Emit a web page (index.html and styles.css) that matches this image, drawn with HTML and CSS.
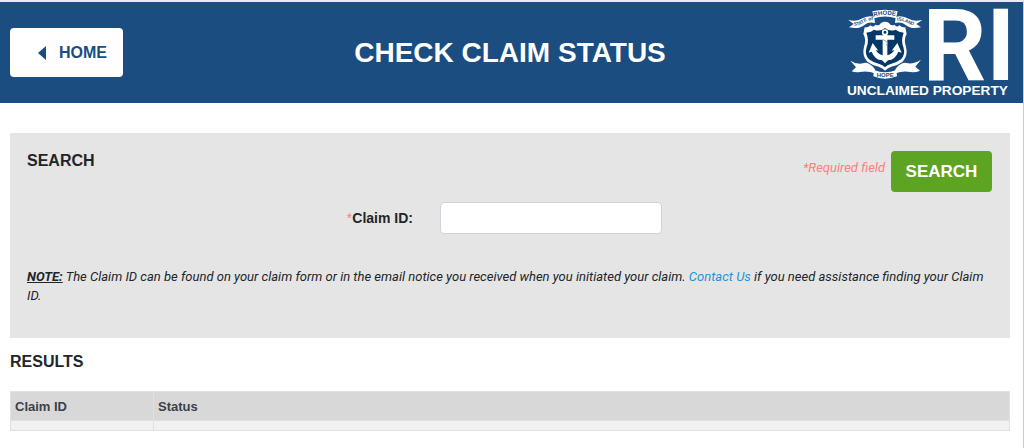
FILE: index.html
```
<!DOCTYPE html>
<html lang="en">
<head>
  <meta charset="UTF-8">
  <title>Check Claim Status</title>
  <link rel="stylesheet" href="styles.css">
</head>
<body>
  <header class="header">
    <button type="button" class="btn-home">
      <svg class="caret" viewBox="0 0 8 14" aria-hidden="true"><path d="M8 0v14L0 7z"/></svg>
      HOME
    </button>
    <h1>CHECK CLAIM STATUS</h1>
    <svg class="logo" viewBox="6 12 492 270" role="img" aria-label="RI Unclaimed Property">
      <!-- shield -->
      <path class="white" d="M62 70 Q72 72 80 64 Q88 72 94 62 Q105 68 111 57 Q123 50 135 57 Q141 68 152 62 Q158 72 166 64 Q174 72 184 70 L188 90 Q178 108 186 128 Q193 154 176 173 Q160 185 142 188 Q130 192 123 200 Q116 192 104 188 Q86 185 70 173 Q53 154 60 128 Q68 108 58 90z"/>
      <path class="navy" d="M67 86 Q82 84 91 77 Q108 84 123 72 Q138 84 155 77 Q164 84 179 86 Q170 108 178 129 Q185 151 171 166 Q156 177 140 180 Q130 183 123 190 Q116 183 106 180 Q90 177 75 166 Q61 151 68 129 Q76 108 67 86z"/>
      <!-- anchor -->
      <path class="white" d="M118 90 H129 V94 H151 V107 H130 V154 Q145 150 151 138 L143 140 L160 117 L173 146 L163 143 Q154 167 132 169 L123 178 L114 169 Q92 167 83 143 L74 146 L86 117 L103 140 L95 138 Q101 150 116 154 V107 H95 V94 H118z"/>
      <circle class="ring" cx="123" cy="85" r="7"/>
      <path class="rope" d="M118 107 Q136 115 127 124"/>
      <!-- top ribbon -->
      <path class="white" d="M13 48 Q39 53 50 45 Q73 33 91 39 L93 57 Q74 53 61 63 Q46 77 15 70 L29 60z"/>
      <path class="white" d="M235 48 Q209 53 196 45 Q173 33 155 39 L153 57 Q172 53 185 63 Q200 77 231 70 L217 60z"/>
      <path class="white" d="M85 22 Q123 12 161 22 L156 43 Q123 32 90 43z"/>
      <path id="rhode" class="none" d="M90 38 Q123 27 160 38"/>
      <path id="state" class="none" d="M29 64 Q46 66 59 56 Q73 46 96 50"/>
      <path id="island" class="none" d="M160 50 Q175 48 188 56 Q201 65 225 64"/>
      <text class="motto"><textPath href="#rhode">RHODE</textPath></text>
      <text class="motto small"><textPath href="#state">STATE of</textPath></text>
      <text class="motto small"><textPath href="#island">ISLAND</textPath></text>
      <!-- bottom ribbon -->
      <path class="white" d="M19 170 Q42 184 60 177 Q74 174 92 194 L96 209 Q70 199 48 204 Q35 206 23 202 L36 190z"/>
      <path class="white" d="M231 167 Q206 182 188 177 Q172 174 155 194 L151 209 Q177 199 199 204 Q214 206 228 200 L214 188z"/>
      <path class="white" d="M90 198 Q123 212 157 198 L159 217 Q123 231 88 217z"/>
      <text class="motto" x="98" y="220">HOPE</text>
      <text class="state-code" x="236" y="228">RI</text>
      <text class="caption" x="9" y="273">UNCLAIMED PROPERTY</text>
    </svg>
  </header>

  <main>
    <form class="search">
      <div class="search-top">
        <h2>SEARCH</h2>
        <span class="required">*Required field</span>
        <button type="button" class="btn-search">SEARCH</button>
      </div>
      <div class="field">
        <label for="claimId"><span>*</span>Claim ID:</label>
        <input type="text" id="claimId" name="claimId" required>
      </div>
      <p class="note"><strong>NOTE:</strong> The Claim ID can be found on your claim form or in the email notice you received when you initiated your claim. <a href="#">Contact Us</a> if you need assistance finding your Claim ID.</p>
    </form>

    <h2>RESULTS</h2>
    <table>
      <thead>
        <tr>
          <th class="col-id">Claim ID</th>
          <th>Status</th>
        </tr>
      </thead>
      <tbody>
        <tr>
          <td></td>
          <td></td>
        </tr>
      </tbody>
    </table>
  </main>
</body>
</html>
```
FILE: styles.css
```
* {
  box-sizing: border-box;
}

body {
  margin: 0;
  min-height: 100vh;
  border-top: 2px solid #e9ecef;
  border-right: 1px solid #ccc;
  font-family: "Liberation Sans", Arial, sans-serif;
  font-size: 14px;
  color: #212529;
  background-color: #fff;
}

h1,
h2 {
  margin: 0;
}

h2 {
  font-size: 16px;
  line-height: 20px;
}

.header {
  display: grid;
  grid-template-columns: 1fr auto 1fr;
  align-items: center;
  height: 101px;
  padding: 0 13px 0 10px;
  background-color: #1b4d81;
  color: #fff;
}

.header h1 {
  font-size: 28px;
}

.btn-home {
  display: flex;
  align-items: center;
  justify-content: flex-end;
  gap: 13px;
  width: 113px;
  height: 49px;
  padding: 0 16px;
  border: none;
  border-radius: 4px;
  background-color: #fff;
  color: #1b4d81;
  font-family: inherit;
  font-size: 16px;
  font-weight: bold;
  cursor: pointer;
}

.caret {
  width: 8px;
  height: 14px;
  fill: #1b4d81;
}

.logo {
  justify-self: end;
  width: 164px;
  height: 90px;
  overflow: visible;
}

.logo .white {
  fill: #fff;
}

.logo .navy {
  fill: #053769;
}

.logo .none {
  fill: none;
}

.logo .ring {
  fill: none;
  stroke: #fff;
  stroke-width: 5px;
}

.logo .rope {
  fill: none;
  stroke: #7f9bb8;
  stroke-width: 3px;
}

.motto {
  fill: #1b4d81;
  font-size: 18px;
  font-weight: bold;
}

.motto.small {
  font-size: 14px;
}

.state-code {
  fill: #fff;
  font-family: Roboto, sans-serif;
  font-size: 298px;
  font-weight: bold;
}

.caption {
  fill: #fff;
  font-size: 41px;
  font-weight: bold;
}

main {
  padding: 30px 13px 16px 10px;
}

.search {
  min-height: 205px;
  margin-bottom: 14px;
  padding: 18px 18px 32px 17px;
  background-color: #e5e5e5;
}

.search-top {
  display: flex;
  align-items: flex-start;
}

.search-top h2 {
  flex: 1;
}

.required {
  margin-right: 6px;
  font-family: Roboto, sans-serif;
  font-size: 13px;
  line-height: 34px;
  font-style: italic;
  color: #ff8080;
}

.btn-search {
  width: 101px;
  height: 41px;
  padding: 0;
  border: none;
  border-radius: 4px;
  background-color: #5da423;
  color: #fff;
  font-family: inherit;
  font-size: 17px;
  font-weight: bold;
  cursor: pointer;
}

.field {
  display: grid;
  grid-template-columns: 40% 222px;
  column-gap: 27px;
  align-items: center;
  margin-top: 10px;
}

.field label {
  text-align: right;
  font-weight: bold;
}

.field label span {
  font-weight: normal;
  color: #ff8080;
}

.field input {
  height: 32px;
  padding: 4px 8px;
  border: 1px solid #ced4da;
  border-radius: 4px;
  background-color: #fff;
  font-family: inherit;
  font-size: 14px;
}

.note {
  margin: 33px 0 0;
  font-family: Roboto, sans-serif;
  font-size: 13px;
  line-height: 19px;
  font-style: italic;
}

.note strong {
  text-decoration: underline;
}

.note a {
  color: #1c94e0;
  text-decoration: none;
}

table {
  width: 100%;
  margin-top: 19px;
  border-collapse: collapse;
  table-layout: fixed;
}

th,
td {
  border: 1px solid #dee2e6;
}

th {
  height: 29px;
  padding: 0 4px;
  background-color: #d8d8d8;
  color: #3c4248;
  font-size: 13px;
  text-align: left;
}

td {
  height: 10px;
  padding: 0;
  background-color: #f1f1f1;
}

.col-id {
  width: 143px;
}
```
